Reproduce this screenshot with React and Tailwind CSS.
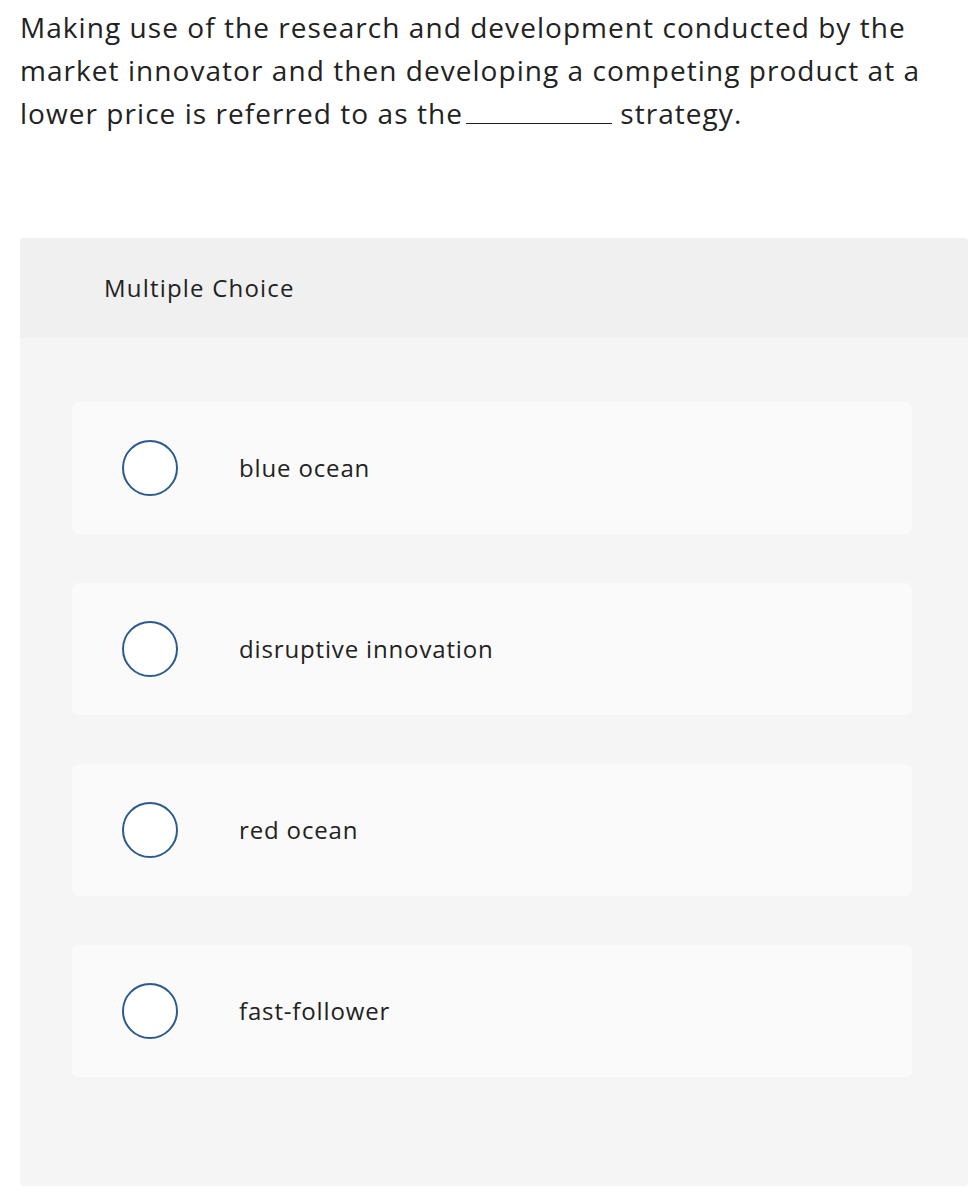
import React from "react";

const options = ["blue ocean", "disruptive innovation", "red ocean", "fast-follower"];

export default function App() {
  return (
    <div className="min-h-[1202px] bg-white text-[#222222]" style={{ fontFamily: "'Open Sans', sans-serif" }}>
      <div className="pl-[20px] pr-[10px] pt-[6px] text-[28px] leading-[43px] tracking-[1.05px]">
        Making use of the research and development conducted by the
        <br />
        market innovator and then developing a competing product at a
        <br />
        lower price is referred to as the
        <span className="ml-[3px] inline-block h-[20px] w-[146px] border-b-[1.5px] border-[#222] align-baseline"></span>{" "}
        strategy.
      </div>
      <div className="ml-[20px] mt-[103px] w-[948px] rounded-[4px] bg-[#f5f5f5] pb-[109px]">
        <div className="flex h-[100px] items-center rounded-t-[4px] bg-[#f0f0f0] pl-[84px] text-[24px] tracking-[1.2px]">
          Multiple Choice
        </div>
        <div className="flex flex-col gap-[49px] pl-[52px] pr-[56px] pt-[64px]">
          {options.map((o) => (
            <div key={o} className="flex h-[132px] items-center rounded-[6px] bg-[#fafafa] pl-[50px]">
              <div className="h-[56px] w-[56px] shrink-0 rounded-full border-2 border-[#2c5a8e] bg-white"></div>
              <div className="ml-[61px] text-[24px] tracking-[0.85px]">{o}</div>
            </div>
          ))}
        </div>
      </div>
    </div>
  );
}
